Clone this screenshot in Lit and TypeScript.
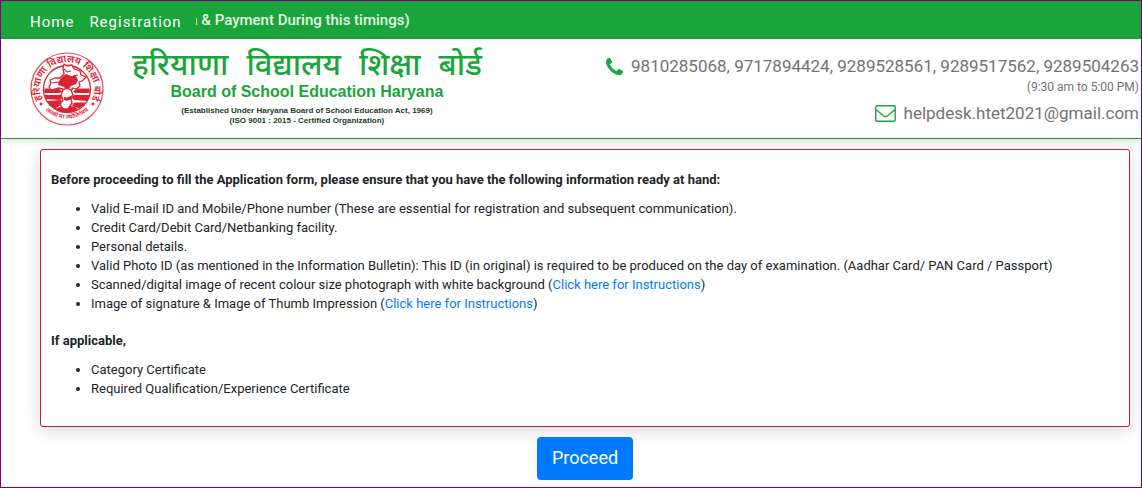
import { LitElement, html, css, svg } from "lit";
import { customElement } from "lit/decorators.js";

const PHONES = ["9810285068", "9717894424", "9289528561", "9289517562", "9289504263"];
const BOARD_NAME = ["हरियाणा", "विद्यालय", "शिक्षा", "बोर्ड"];

@customElement("board-emblem")
class BoardEmblem extends LitElement {
  static styles = css`
    :host { display: block; width: 74px; height: 74px; flex: none; }
    .emblem { display: block; width: 100%; height: 100%; }
    .ring-text { font: 600 10px "Noto Sans Devanagari", "Noto Sans", sans-serif; fill: #dc2332; }
    .motto { font: 600 6px "Noto Sans Devanagari", "Noto Sans", sans-serif; fill: #dc2332; }
  `;
  render() {
    return html`<svg class="emblem" viewBox="0 0 74 74" role="img" aria-label="Board emblem">
      ${svg`
      <defs>
        <path id="top" d="M12.500 48.500 A27 27 0 1 1 61.500 48.500" />
        <path id="bottom" d="M10 52 A32 32 0 0 0 64 52" />
      </defs>
      <circle cx="37" cy="37" r="36" fill="#fff" stroke="#e0525c" stroke-width="1.200" />
      <circle cx="37" cy="37" r="23.500" fill="#fff" stroke="#dc2332" stroke-width="1.300" />
      <path d="M14.500 36.500h14l4 3-3 1.500H14.300zM14.500 43h17l2 3-4 2-13.500-1zM17 49l14-1 2 3-8 6q-5-3-8-8zM59.500 36.500H47l-4 3 2 1.500h14.700zM59.500 43H44l-2 3 2 2 14 1zM56.500 50.500H44l-2 3 6 3.500q5-2 8.500-6.500zM24 57l10-3h7l9 2.500q-13 8-26 .5z" fill="#dc2332" />
      <path d="M34 12l3 2 5-1 2 4 6 2 1 4 5 2-4 4-3 1 1 4-4 3-3-1-4 5-3 1-3-5-5-1-7 2-2-3 2-4-1-3 5-2 5 0 4-4-1-5z" fill="#fff" stroke="#dc2332" stroke-width="1.300" stroke-linejoin="round" />
      <path d="M32 25l4-3 5 2 5 0 2 4-2 4-5 2-4 5-3-4-6-2 1-4z" fill="#dc2332" />
      <path d="M22 31l6-1 3 2M34 17l3 3 4-1M43 24l5-1" fill="none" stroke="#dc2332" stroke-width="1.100" />
      <path d="M33 38q4-3 8 0l2 5-2 4 1 4-4 6h-5l-3-5 3-4-2-5z" fill="#fff" stroke="#dc2332" stroke-width="1.400" />
      <path d="M34 45c3 1 5 0 8-2l-1 4c-2 2-5 2-7 1z" fill="#dc2332" />
      <circle cx="11" cy="52" r="1.400" fill="#dc2332" /><circle cx="63" cy="52" r="1.400" fill="#dc2332" />
      <text class="ring-text" text-anchor="middle"><textPath href="#top" startOffset="50%">हरियाणा विद्यालय शिक्षा बोर्ड</textPath></text>
      <text class="motto" text-anchor="middle"><textPath href="#bottom" startOffset="50%">तमसो मा ज्योतिर्गमय</textPath></text>`}
    </svg>`;
  }
}

@customElement("app-root")
class AppRoot extends LitElement {
  static styles = css`
    :host {
      display: block;
      box-sizing: border-box;
      min-height: 100vh;
      border: 1px solid #800080;
      background: #fff;
      color: #212529;
      font-family: Roboto, sans-serif;
      font-size: 13px;
      line-height: 19px;
    }
    .topbar { display: flex; align-items: center; gap: 14px; height: 38px; padding: 0 29px; background: #1aa53b; color: #fff; }
    .nav { display: flex; gap: 15px; padding-top: 4px; }
    .nav-link { color: inherit; text-decoration: none; font-size: 15px; letter-spacing: 1px; }
    .notice { display: flex; justify-content: flex-end; flex: 0 1 214px; min-width: 0; overflow: hidden; white-space: nowrap; font-size: 15px; font-weight: 500; color: #e4f5e7; }
    .header { display: flex; justify-content: space-between; gap: 16px; padding: 13px 2px 12px 29px; border-bottom: 1px solid #1aa53b; box-shadow: 0 2px 6px rgba(0, 0, 0, 0.15); }
    .brand { display: flex; align-items: center; gap: 28px; }
    .names { text-align: center; font-family: "Liberation Sans", sans-serif; font-weight: 700; color: #1aa53b; }
    .hindi { display: flex; gap: 18px; margin: 0; font: 500 31px/30px "Noto Sans Devanagari", "Noto Sans", sans-serif; }
    .english { margin: 0 0 5px; font-size: 16px; line-height: 18px; }
    .small { margin: 0; font-size: 8px; line-height: 10px; color: #1b3a2a; }
    .contact { display: flex; flex-direction: column; align-items: flex-end; padding-top: 2px; color: #737373; }
    .line { display: flex; align-items: center; gap: 8px; font-size: 17px; line-height: 24px; }
    .hours { font-size: 12px; line-height: 19px; padding-bottom: 4px; }
    .icon { display: block; flex: none; fill: #1aa53b; }
    .main { display: flex; flex-direction: column; align-items: center; padding: 10px 11px 7px 39px; gap: 10px; }
    .card { align-self: stretch; border: 1px solid #c01f33; border-radius: 3px; background: #fff; box-shadow: 0 4px 18px rgba(0, 10, 40, 0.14); padding: 20px 10px 28px; }
    .title { margin: 0 0 10px; font-size: 13px; line-height: 19px; font-weight: 700; }
    .list { margin: 0; padding-left: 40px; }
    .list + .title { margin-top: 18px; }
    .link { color: #007bff; text-decoration: none; }
    .proceed { border: 0; border-radius: 4px; background: #007bff; color: #fff; padding: 7px 15px 9px; font-family: inherit; font-size: 18px; line-height: 27px; }
  `;

  render() {
    return html`
      <div class="topbar">
        <nav class="nav">
          <a class="nav-link" href="#home">Home</a>
          <a class="nav-link" href="#registration">Registration</a>
        </nav>
        <div class="notice"><span>n &amp; Payment During this timings)</span></div>
      </div>
      <header class="header">
        <div class="brand">
          <board-emblem></board-emblem>
          <div class="names">
            <h1 class="hindi">${BOARD_NAME.map((word) => html`<span>${word}</span> `)}</h1>
            <h2 class="english">Board of School Education Haryana</h2>
            <p class="small">(Established Under Haryana Board of School Education Act, 1969)</p>
            <p class="small">(ISO 9001 : 2015 - Certified Organization)</p>
          </div>
        </div>
        <div class="contact">
          <div class="line">
            <svg class="icon" width="17" height="17" viewBox="0 0 1408 1408" aria-hidden="true"><path d="M1408 1112q0 27-10 70.500t-21 68.500q-21 50-122 106-94 51-186 51-27 0-53-3.500t-57.500-12.500-47-14.500-55.500-20.500-49-18q-98-35-175-83-127-79-264-216t-216-264q-48-77-83-175-3-9-18-49t-20.500-55.500-14.500-47-12.500-57.500-3.500-53q0-92 51-186 56-101 106-122 25-11 68.500-21t70.500-10q14 0 21 3 18 6 53 76 11 19 30 54t35 63.500 31 53.500q3 4 17.500 25t21.500 35.500 7 28.500q0 20-28.500 50t-62 55-62 53-28.500 46q0 9 5 22.500t8.500 20.500 14 24 11.500 19q76 137 174 235t235 174q2 1 19 11.500t24 14 20.500 8.500 22.500 5q18 0 46-28.500t53-62 55-62 50-28.500q14 0 28.500 7t35.500 21.500 25 17.500q25 15 53.500 31t63.500 35 54 30q70 35 76 53 3 7 3 21z" /></svg>
            <span>${PHONES.join(", ")}</span>
          </div>
          <div class="hours">(9:30 am to 5:00 PM)</div>
          <div class="line">
            <svg class="icon" width="21" height="17" viewBox="0 0 21 17" aria-hidden="true"><path fill="none" stroke="#1aa53b" stroke-width="1.400" stroke-linejoin="round" d="M2 .8h17q1.200 0 1.200 1.200v13q0 1.200-1.200 1.200H2q-1.200 0-1.200-1.200V2Q.8.800 2 .8zM.9 4.500l7.500 6.200q2.100 1.600 4.200 0l7.500-6.200" /></svg>
            <span>helpdesk.htet2021@gmail.com</span>
          </div>
        </div>
      </header>
      <main class="main">
        <section class="card">
          <h3 class="title">Before proceeding to fill the Application form, please ensure that you have the following information ready at hand:</h3>
          <ul class="list">
            <li>Valid E-mail ID and Mobile/Phone number (These are essential for registration and subsequent communication).</li>
            <li>Credit Card/Debit Card/Netbanking facility.</li>
            <li>Personal details.</li>
            <li>Valid Photo ID (as mentioned in the Information Bulletin): This ID (in original) is required to be produced on the day of examination. (Aadhar Card/ PAN Card / Passport)</li>
            <li>Scanned/digital image of recent colour size photograph with white background (<a class="link" href="#photo">Click here for Instructions</a>)</li>
            <li>Image of signature &amp; Image of Thumb Impression (<a class="link" href="#signature">Click here for Instructions</a>)</li>
          </ul>
          <h3 class="title">If applicable,</h3>
          <ul class="list">
            <li>Category Certificate</li>
            <li>Required Qualification/Experience Certificate</li>
          </ul>
        </section>
        <button class="proceed" type="button">Proceed</button>
      </main>
    `;
  }
}
